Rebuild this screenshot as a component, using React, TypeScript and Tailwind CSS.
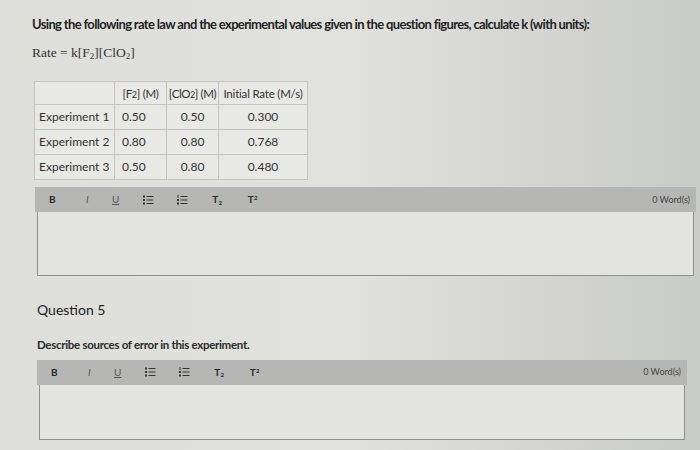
import React from 'react';

const rows = [
  { label: 'Experiment 1', f2: '0.50', clo2: '0.50', rate: '0.300' },
  { label: 'Experiment 2', f2: '0.80', clo2: '0.80', rate: '0.768' },
  { label: 'Experiment 3', f2: '0.50', clo2: '0.80', rate: '0.480' },
];

function Toolbar() {
  return (
    <div className="flex items-center h-[25px] bg-[#b6b7b4] text-[#2a2a2a] text-[10px]">
      <span className="w-[14px] ml-[14px] font-bold">B</span>
      <span className="w-[10px] ml-[23px] italic text-[#555]">I</span>
      <span className="ml-[16px] underline text-[#555]">U</span>
      {/* bullet list */}
      <svg className="ml-[24px]" width="11" height="10" viewBox="0 0 11 10">
        <rect x="0" y="0.5" width="2" height="2" fill="#333" />
        <rect x="0" y="4" width="2" height="2" fill="#333" />
        <rect x="0" y="7.5" width="2" height="2" fill="#333" />
        <rect x="3.5" y="1" width="7" height="1" fill="#333" />
        <rect x="3.5" y="4.5" width="7" height="1" fill="#333" />
        <rect x="3.5" y="8" width="7" height="1" fill="#333" />
      </svg>
      {/* numbered list */}
      <svg className="ml-[23px]" width="11" height="10" viewBox="0 0 11 10">
        <rect x="0.5" y="0" width="1" height="3" fill="#333" />
        <rect x="0" y="4" width="2" height="2" fill="#333" />
        <rect x="0" y="7.5" width="2" height="2" fill="#333" />
        <rect x="3.5" y="1" width="7" height="1" fill="#333" />
        <rect x="3.5" y="4.5" width="7" height="1" fill="#333" />
        <rect x="3.5" y="8" width="7" height="1" fill="#333" />
      </svg>
      <span className="ml-[24px] font-bold">
        T<sub className="text-[6px]">2</sub>
      </span>
      <span className="ml-[26px] font-bold">
        T<sup className="text-[6px]">2</sup>
      </span>
      <span className="ml-auto mr-[6px] text-[9px] text-[#444]">0 Word(s)</span>
    </div>
  );
}

function Editor({ width, height }: { width: string; height: string }) {
  return (
    <div className={width}>
      <Toolbar />
      <div className={`${height} bg-[#e3e3df] border border-t-0 border-[#8f908d] mx-[2px]`}></div>
    </div>
  );
}

export default function App() {
  return (
    <div
      className="w-[700px] h-[450px] overflow-hidden bg-gradient-to-r from-[#dedfdb] via-[#e1e1dd] to-[#c9cbc7] text-[#1f1f1f]"
      style={{ fontFamily: 'Lato, "Liberation Sans", sans-serif' }}
    >
      <div className="pt-[16px] pl-[32px]">
        <p className="text-[13px] font-bold tracking-[-0.65px] leading-[16px]">
          Using the following rate law and the experimental values given in the question figures, calculate k (with units):
        </p>
        <p className="mt-[11px] text-[13.5px] text-[#333]" style={{ fontFamily: '"Liberation Serif", serif' }}>
          Rate = k[F<sub className="text-[9px]">2</sub>][ClO<sub className="text-[9px]">2</sub>]
        </p>

        <table className="mt-[18px] ml-[2px] border-collapse text-[12px] text-[#333] bg-[#e8e8e5]">
          <thead>
            <tr className="h-[23px]">
              <th className="w-[80px] border border-[#c4c4c1]"></th>
              <th className="w-[52px] border border-[#c4c4c1] font-normal text-[11.5px] text-center whitespace-nowrap tracking-[-0.3px]">
                [F<span className="text-[9px]">2</span>] (M)
              </th>
              <th className="w-[52px] border border-[#c4c4c1] font-normal text-[11.5px] text-center whitespace-nowrap tracking-[-0.4px]">
                [ClO<span className="text-[9px]">2</span>] (M)
              </th>
              <th className="w-[89px] border border-[#c4c4c1] font-normal text-[11.5px] text-center whitespace-nowrap tracking-[-0.2px]">
                Initial Rate (M/s)
              </th>
            </tr>
          </thead>
          <tbody>
            {rows.map((r) => (
              <tr key={r.label} className="h-[25px]">
                <td className="border border-[#c4c4c1] pl-[4px] pr-[3px] whitespace-nowrap">{r.label}</td>
                <td className="border border-[#c4c4c1] pl-[7px]">{r.f2}</td>
                <td className="border border-[#c4c4c1] text-center">{r.clo2}</td>
                <td className="border border-[#c4c4c1] text-center">{r.rate}</td>
              </tr>
            ))}
          </tbody>
        </table>
      </div>

      <div className="mt-[7px] pl-[35px]">
        <Editor width="w-[661px]" height="h-[64px]" />
      </div>

      <div className="pl-[37px]">
        <p className="mt-[23px] text-[14px] text-[#222]">Question 5</p>
        <p className="mt-[16px] text-[11.5px] font-bold tracking-[-0.3px] text-[#2a2a2a]">
          Describe sources of error in this experiment.
        </p>
      </div>

      <div className="mt-[6px] pl-[37px]">
        <Editor width="w-[650px]" height="h-[55px]" />
      </div>
    </div>
  );
}
